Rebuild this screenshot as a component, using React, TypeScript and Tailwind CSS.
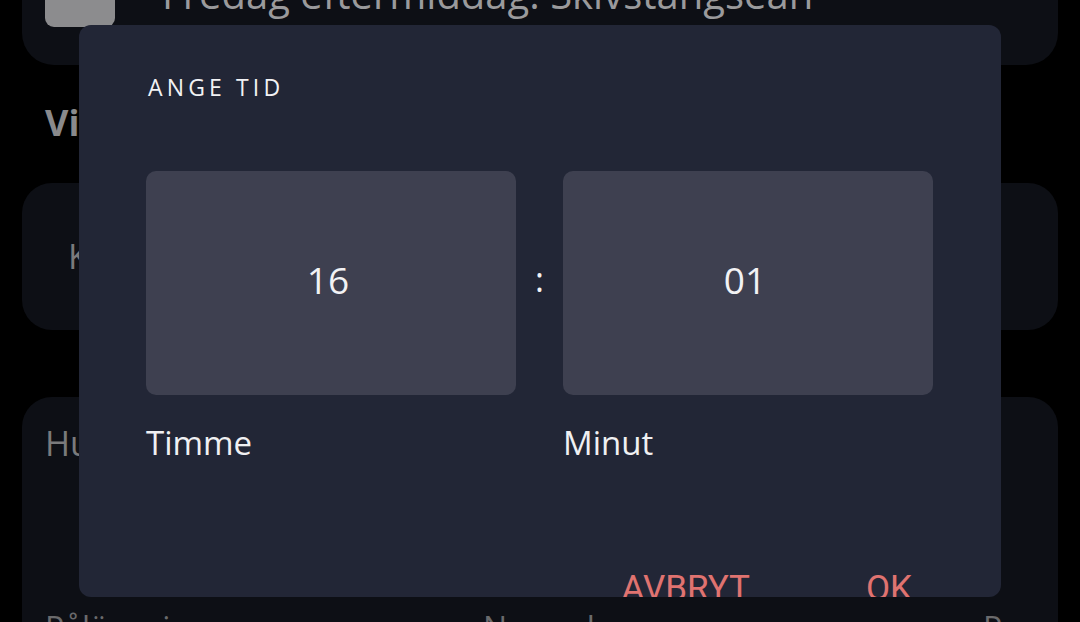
import React from 'react';

// Time picker dialog over a dimmed workout settings page.

const SANS = "font-['Open_Sans','Noto_Sans',sans-serif]";

function BackgroundPage() {
  return (
    <div className="h-[622px] overflow-hidden bg-black px-[22px]">
      {/* Card partially scrolled off the top */}
      <div className="-mt-[45px] flex h-[110px] items-end gap-[47px] rounded-[32px] bg-[#0d0f15] px-[23px] pb-[38px]">
        <div className="h-[70px] w-[70px] shrink-0 rounded-[9px] bg-[#8c8c8e]" />
        <div className="mb-[10px] text-[40px] leading-[46px] whitespace-nowrap text-[#9a9a9c]">
          Fredag eftermiddag: Skivstångsean
        </div>
      </div>

      <div className="mt-[36px] pl-[23px] text-[36px] font-bold leading-[44px] text-[#8a8a8c]">
        Vila
      </div>

      <div className="mt-[38px] flex h-[147px] items-center rounded-[30px] bg-[#0d0f15] px-[46px]">
        <span className="text-[34px] text-[#7a7a7c]">Klar</span>
      </div>

      <div className="mt-[67px] h-[300px] rounded-[30px] bg-[#0d0f15] px-[23px] pt-[18px]">
        <div className="text-[34px] leading-[56px] text-[#7a7a7c]">Huvudset</div>
        <div className="mt-[137px] flex text-[32px] leading-[40px] text-[#6a6a6c]">
          <span className="w-[438px]">Påläggning</span>
          <span className="w-[500px]">Normal</span>
          <span>P</span>
        </div>
      </div>
    </div>
  );
}

function TimeBox({ value }: { value: string }) {
  return (
    <div className="flex h-[224px] w-[370px] items-center justify-center rounded-[10px] bg-[#3e4050] pb-[8px] pr-[6px]">
      <span className="text-[37px] leading-none text-[#f2f2f4]">{value}</span>
    </div>
  );
}

export default function App() {
  return (
    <div className={`relative h-[622px] w-[1080px] overflow-hidden ${SANS}`}>
      <BackgroundPage />

      <div className="absolute inset-0 flex items-center justify-center">
        <div className="h-[572px] w-[922px] overflow-hidden rounded-[12px] bg-[#222636] pl-[67px] pr-[68px] pt-[44px]">
          <div className="pl-[2px] text-[23px] leading-[36px] tracking-[0.18em] text-[#f2f2f4]">
            ANGE TID
          </div>

          <div className="mt-[66px] flex items-center">
            <TimeBox value="16" />
            <div className="flex w-[47px] justify-center pb-[8px] text-[34px] leading-none text-[#f2f2f4]">:</div>
            <TimeBox value="01" />
          </div>

          <div className="mt-[26px] flex text-[33px] leading-[44px] text-[#f0f0f2]">
            <span className="w-[417px]">Timme</span>
            <span>Minut</span>
          </div>

          <div className="mt-[104px] flex justify-end pr-[21px] font-['Roboto',sans-serif] text-[35px] leading-[40px] text-[#e07370]">
            <span className="mr-[116px]">AVBRYT</span>
            <span>OK</span>
          </div>
        </div>
      </div>
    </div>
  );
}
